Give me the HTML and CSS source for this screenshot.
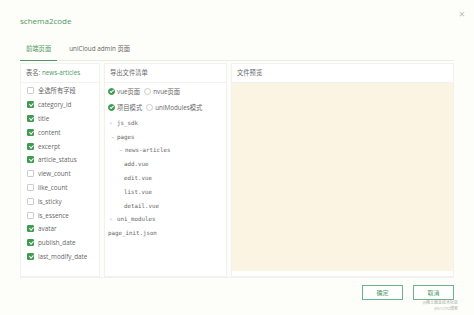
FILE: index.html
```html
<!DOCTYPE html>
<html lang="zh-CN">
<head>
    <meta charset="UTF-8">
    <title>schema2code</title>
    <link rel="stylesheet" href="styles.css">
</head>
<body>
<div class="dialog">
    <div class="header">
        <span class="title">schema2code</span>
        <span class="close">&times;</span>
    </div>

    <div class="tabs">
        <span class="tab active">前端页面</span>
        <span class="tab">uniCloud admin 页面</span>
    </div>

    <div class="panels">
        <div class="panel fields">
            <div class="panel-head">表名: <span class="green">news-articles</span></div>
            <ul class="checks">
                <li><i class="cb"></i>全选所有字段</li>
                <li><i class="cb on"></i>category_id</li>
                <li><i class="cb on"></i>title</li>
                <li><i class="cb on"></i>content</li>
                <li><i class="cb on"></i>excerpt</li>
                <li><i class="cb on"></i>article_status</li>
                <li><i class="cb"></i>view_count</li>
                <li><i class="cb"></i>like_count</li>
                <li><i class="cb"></i>is_sticky</li>
                <li><i class="cb"></i>is_essence</li>
                <li><i class="cb on"></i>avatar</li>
                <li><i class="cb on"></i>publish_date</li>
                <li><i class="cb on"></i>last_modify_date</li>
            </ul>
        </div>

        <div class="panel files">
            <div class="panel-head">导出文件清单</div>
            <div class="radios">
                <span class="radio"><i class="rd on"></i>vue页面</span>
                <span class="radio"><i class="rd"></i>nvue页面</span>
            </div>
            <div class="radios">
                <span class="radio"><i class="rd on"></i>项目模式</span>
                <span class="radio"><i class="rd"></i>uniModules模式</span>
            </div>
            <ul class="tree">
                <li><span class="arr">›</span>js_sdk</li>
                <li><span class="arr down">›</span>pages</li>
                <li class="lv1"><span class="arr down">›</span>news-articles</li>
                <li class="lv2">add.vue</li>
                <li class="lv2">edit.vue</li>
                <li class="lv2">list.vue</li>
                <li class="lv2">detail.vue</li>
                <li><span class="arr">›</span>uni_modules</li>
                <li class="lv0">page_init.json</li>
            </ul>
        </div>

        <div class="panel preview">
            <div class="panel-head">文件预览</div>
            <div class="preview-body"></div>
        </div>
    </div>

    <div class="footer">
        <button class="btn">确定</button>
        <button class="btn">取消</button>
    </div>
    <div class="mark">@稀土掘金技术社区<br>@51CTO博客</div>
</div>
</body>
</html>
```

FILE: styles.css
```css
body {
    margin: 0;
    background: #fdfdf9;
    font-family: "Open Sans", "Noto Sans CJK SC", sans-serif;
    color: #666;
    font-size: 6.3px;
}
.dialog {
    width: 474px;
    height: 315px;
    padding: 0 20px;
    box-sizing: border-box;
    position: relative;
}
.header {
    display: flex;
    justify-content: space-between;
    align-items: center;
    height: 40px;
}
.title { color: #4e9a62; font-size: 8px; }
.close {
    color: #bbb;
    font-size: 11px;
    margin-right: -11px;
    margin-top: -14px;
}
.tabs {
    display: flex;
    gap: 12px;
    height: 20px;
    align-items: flex-end;
    border-bottom: 1px solid #ececec;
    padding-left: 5px;
}
.tab {
    line-height: 14px;
    padding-bottom: 4px;
    color: #666;
}
.tab.active {
    color: #4e9a62;
    border-bottom: 1px solid #4e9a62;
    margin-left: -5px;
    padding: 0 6px 4px;
    margin-bottom: -1px;
}
.panels {
    display: grid;
    grid-template-columns: 80px 123px 1fr;
    gap: 4px;
    margin-top: 2px;
    height: 214px;
    border-bottom: 1px solid #f1f1ee;
}
.panel {
    background: #fff;
    border: 1px solid #f1f1ee;
    box-sizing: border-box;
    display: flex;
    flex-direction: column;
}
.panel-head {
    height: 18px;
    line-height: 18px;
    padding-left: 5px;
    border-bottom: 1px solid #f1f1ee;
}
.green { color: #4e9a62; }
.checks, .tree {
    list-style: none;
    margin: 0;
    padding: 0;
}
.checks { padding: 1px 0 0 6px; }
.checks li {
    height: 13.8px;
    display: flex;
    align-items: center;
    gap: 4px;
}
.cb {
    width: 5px;
    height: 5px;
    border: 1px solid #ccc;
    border-radius: 1px;
    box-sizing: content-box;
    position: relative;
}
.cb.on { background: #3f9b50; border-color: #3f9b50; }
.cb.on::after {
    content: "";
    position: absolute;
    left: 1.5px;
    top: 0;
    width: 1.5px;
    height: 3px;
    border: solid #fff;
    border-width: 0 1px 1px 0;
    transform: rotate(45deg);
}
.radios {
    display: flex;
    gap: 4px;
    height: 16px;
    align-items: center;
    padding-left: 3px;
}
.radios:first-of-type { margin-top: -1px; }
.radio { display: flex; align-items: center; gap: 2px; }
.rd {
    width: 5px;
    height: 5px;
    border: 1px solid #ccc;
    border-radius: 50%;
    position: relative;
}
.rd.on { background: #3f9b50; border-color: #3f9b50; }
.rd.on::after {
    content: "";
    position: absolute;
    left: 1.6px;
    top: 0.4px;
    width: 1.2px;
    height: 2.6px;
    border: solid #fff;
    border-width: 0 1px 1px 0;
    transform: rotate(45deg);
}
.tree {
    font-family: "DejaVu Sans Mono", monospace;
    font-size: 5.8px;
    color: #666;
    padding-left: 3px;
    margin-top: 1px;
}
.tree li {
    height: 13.8px;
    display: flex;
    align-items: center;
}
.arr {
    display: inline-block;
    width: 9px;
    color: #aaa;
    padding-left: 1px;
    box-sizing: border-box;
}
.arr.down { transform: rotate(90deg); width: 9px; text-align: center; }
.tree .lv1 { padding-left: 8px; }
.tree .lv2 { padding-left: 16px; }
.preview-body {
    flex: 1;
    background: #fbf4e3;
    margin-bottom: 5px;
}
.footer {
    display: flex;
    justify-content: flex-end;
    gap: 10px;
    padding-top: 7px;
}
.btn {
    width: 41px;
    height: 15px;
    background: #fff;
    border: 1px solid #6bb58a;
    color: #4e9a62;
    font-family: "Noto Sans CJK SC", sans-serif;
    font-size: 6px;
    padding: 0;
}
.mark {
    position: absolute;
    right: 16px;
    bottom: 3px;
    text-align: right;
    font-size: 4px;
    line-height: 6px;
    color: #aaa;
}
```
